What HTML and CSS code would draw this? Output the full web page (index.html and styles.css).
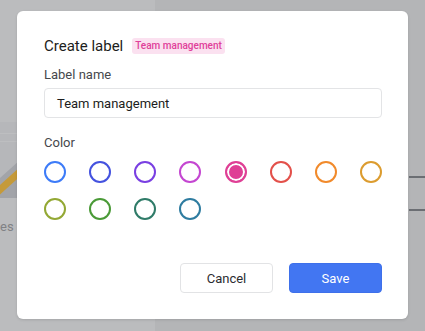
FILE: index.html
```html
<!DOCTYPE html>
<html>
<head>
<meta charset="utf-8">
<link rel="stylesheet" href="styles.css">
</head>
<body>
<div class="backdrop">
  <div class="bg-left">
    <div class="bg-band">
      <div class="bg-line l1"></div>
      <div class="bg-line l2"></div>
      <div class="bg-shade"></div>
      <div class="bg-stripe"></div>
    </div>
    <div class="bg-text">es in</div>
  </div>
  <div class="bg-right">
    <div class="rline r1"></div>
    <div class="rline r2"></div>
  </div>
</div>
<div class="overlay">
  <div class="modal">
    <div class="title-row">
      <h1 class="title">Create label</h1>
      <span class="badge">Team management</span>
    </div>
    <label class="field-label">Label name</label>
    <div class="input">Team management</div>
    <div class="field-label color-label">Color</div>
    <div class="swatches">
      <span class="sw" style="--c:#3d7bf8"></span>
      <span class="sw" style="--c:#4452df"></span>
      <span class="sw" style="--c:#793fe2"></span>
      <span class="sw" style="--c:#c446d1"></span>
      <span class="sw selected" style="--c:#df3f95"></span>
      <span class="sw" style="--c:#e3504a"></span>
      <span class="sw" style="--c:#f18a2b"></span>
      <span class="sw" style="--c:#dc9c2f"></span>
      <span class="sw" style="--c:#93a834"></span>
      <span class="sw" style="--c:#4a9a37"></span>
      <span class="sw" style="--c:#2f7b68"></span>
      <span class="sw" style="--c:#2e7ca0"></span>
    </div>
    <div class="actions">
      <button class="btn cancel">Cancel</button>
      <button class="btn save">Save</button>
    </div>
  </div>
</div>
</body>
</html>
```
FILE: styles.css
```css
* { box-sizing: border-box; }
html, body { margin: 0; padding: 0; }
body {
  width: 425px;
  height: 331px;
  overflow: hidden;
  position: relative;
  font-family: Roboto, "Noto Sans", sans-serif;
  background: #b4b5b7;
}
.backdrop {
  position: absolute;
  inset: 0;
  display: flex;
}
.bg-left {
  width: 155px;
  height: 100%;
  background: #bbbcbe;
  position: relative;
}
.bg-band {
  position: absolute;
  left: 0;
  top: 122px;
  width: 155px;
  height: 76px;
  background: #b6b7ba;
  overflow: hidden;
}
.bg-line {
  position: absolute;
  left: 0;
  right: 0;
  height: 1px;
  background: #bdbec0;
}
.l1 { top: 11px; }
.l2 { top: 19px; }
.bg-shade {
  position: absolute;
  left: 0;
  top: 36px;
  width: 160px;
  height: 80px;
  background: #a2a4a9;
  transform-origin: 0 0;
  transform: skewY(-42deg) translateY(20px);
}
.bg-stripe {
  position: absolute;
  left: -10px;
  top: 72px;
  width: 60px;
  height: 7px;
  background: #c59a3a;
  transform: rotate(-42deg);
  transform-origin: 0 0;
}
.bg-text {
  position: absolute;
  left: 0;
  top: 219px;
  font-size: 13px;
  color: #808185;
}
.bg-right {
  flex: 1;
  position: relative;
}
.rline {
  position: absolute;
  left: 254px;
  right: 0;
  height: 2px;
  background: #6b6e73;
}
.r1 { top: 176px; }
.r2 { top: 209px; }

.overlay {
  position: absolute;
  inset: 0;
  display: flex;
  align-items: center;
  justify-content: center;
}
.modal {
  width: 391px;
  height: 308px;
  margin-top: -1px;
  background: #ffffff;
  border-radius: 6px;
  box-shadow: 0 1px 3px rgba(0,0,0,0.12);
  padding: 25px 26px 26px 27px;
  display: flex;
  flex-direction: column;
}
.title-row {
  display: flex;
  align-items: center;
  gap: 9px;
  height: 20px;
}
.title {
  margin: 0;
  font-size: 15px;
  font-weight: 400;
  color: #1c1d20;
}
.badge {
  background: #fbe1f0;
  color: #e0409a;
  font-size: 10px;
  font-weight: 500;
  padding: 2px 3px;
  border-radius: 3px;
  line-height: 12px;
}
.field-label {
  display: block;
  font-size: 13px;
  color: #46484c;
  margin-top: 10px;
  line-height: 17px;
}
.input {
  margin-top: 5px;
  height: 30px;
  border: 1px solid #e3e4e6;
  border-radius: 4px;
  font-size: 13px;
  color: #1c1d20;
  padding: 0 12px;
  display: flex;
  align-items: center;
}
.color-label {
  margin-top: 16px;
}
.swatches {
  margin-top: 10px;
  display: grid;
  grid-template-columns: repeat(8, 22px);
  justify-content: space-between;
  row-gap: 15px;
}
.sw {
  width: 22px;
  height: 22px;
  border-radius: 50%;
  border: 2.5px solid var(--c);
  display: block;
}
.sw.selected {
  background: var(--c);
  box-shadow: inset 0 0 0 2px #ffffff;
}
.actions {
  margin-top: auto;
  display: flex;
  justify-content: flex-end;
  gap: 16px;
}
.btn {
  width: 93px;
  height: 30px;
  border-radius: 4px;
  font-family: Roboto, "Noto Sans", sans-serif;
  font-size: 13px;
  cursor: pointer;
}
.cancel {
  background: #fff;
  border: 1px solid #e2e3e5;
  color: #2b2c30;
}
.save {
  background: #4276f2;
  border: 1px solid #3e70ea;
  color: #ffffff;
}
```
